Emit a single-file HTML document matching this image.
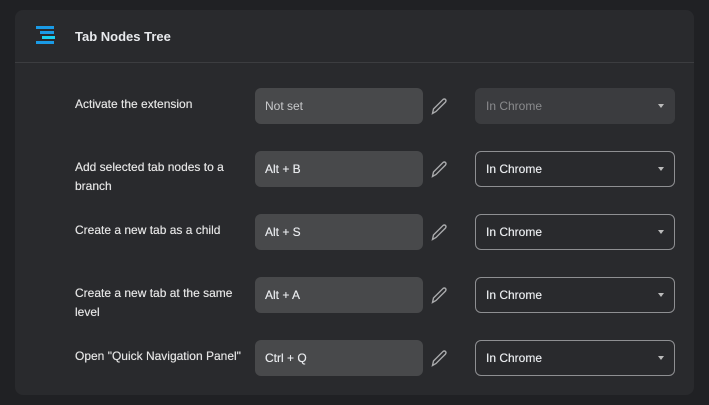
<!DOCTYPE html><html><head><style>
body{margin:0;width:709px;height:405px;background:#202124;font-family:"Liberation Sans",sans-serif;overflow:hidden;position:relative}
.card{position:absolute;left:15px;top:10px;width:679px;height:385px;background:#292a2d;border-radius:8px}
.hdr{position:absolute;left:0;top:0;width:679px;height:52px;border-bottom:1px solid #3c3d40}
.title{position:absolute;left:60px;top:19px;color:#e8eaed;font-size:13px;font-weight:bold}
.lbl{position:absolute;left:75px;color:#e3e3e3;font-size:12px;line-height:19px;width:180px;text-shadow:0 0 0.4px #e3e3e3}
.in{position:absolute;left:255px;width:168px;height:36px;background:#48494b;border-radius:6px;color:#e8eaed;font-size:12px;line-height:36px;text-indent:10px;text-shadow:0 0 0.4px #e8eaed}
.pen{position:absolute;left:430px}
.sel{position:absolute;left:475px;width:198px;height:34px;border:1px solid #8e8f92;border-radius:6px;color:#e8eaed;font-size:12px;line-height:34px;text-indent:10px;text-shadow:0 0 0.4px #e8eaed}
.sel:after{content:"";position:absolute;right:10px;top:15px;border:3.5px solid transparent;border-top:4px solid #bbb}
.dis{background:#3b3c3f;border-color:#3b3c3f;color:#8a8b8d;text-shadow:none}
</style></head><body>
<div class="card"><div class="hdr">
<svg style="position:absolute;left:21px;top:16px" width="20" height="19"><rect x="0" y="0" width="18" height="3" fill="#1a9be6"/><rect x="4" y="5" width="14" height="3" fill="#1a9be6"/><rect x="6" y="10" width="13" height="3" fill="#1ad0f0"/><rect x="0" y="15" width="18" height="3" fill="#1a9be6"/></svg>
<div class="title">Tab Nodes Tree</div></div></div>
<div class="lbl" style="top:95px">Activate the extension</div>
<div class="in" style="top:88px;color:#c8c9cb;text-shadow:none">Not set</div>
<div class="sel dis" style="top:88px">In Chrome</div>
<div class="lbl" style="top:158px">Add selected tab nodes to a branch</div>
<div class="in" style="top:151px">Alt + B</div>
<div class="sel" style="top:151px">In Chrome</div>
<div class="lbl" style="top:221px">Create a new tab as a child</div>
<div class="in" style="top:214px">Alt + S</div>
<div class="sel" style="top:214px">In Chrome</div>
<div class="lbl" style="top:284px">Create a new tab at the same level</div>
<div class="in" style="top:277px">Alt + A</div>
<div class="sel" style="top:277px">In Chrome</div>
<div class="lbl" style="top:347px">Open "Quick Navigation Panel"</div>
<div class="in" style="top:340px">Ctrl + Q</div>
<div class="sel" style="top:340px">In Chrome</div>
<svg class="pen" style="top:96px" width="18" height="20"><path d="M2.5 17.5 L3.5 13 L13 3.5 Q14.5 2.5 15.5 3.5 Q16.5 4.5 15.5 6 L6 15.5 Z" fill="none" stroke="#a8a9ab" stroke-width="1.4"/></svg>
<svg class="pen" style="top:159px" width="18" height="20"><path d="M2.5 17.5 L3.5 13 L13 3.5 Q14.5 2.5 15.5 3.5 Q16.5 4.5 15.5 6 L6 15.5 Z" fill="none" stroke="#a8a9ab" stroke-width="1.4"/></svg>
<svg class="pen" style="top:222px" width="18" height="20"><path d="M2.5 17.5 L3.5 13 L13 3.5 Q14.5 2.5 15.5 3.5 Q16.5 4.5 15.5 6 L6 15.5 Z" fill="none" stroke="#a8a9ab" stroke-width="1.4"/></svg>
<svg class="pen" style="top:285px" width="18" height="20"><path d="M2.5 17.5 L3.5 13 L13 3.5 Q14.5 2.5 15.5 3.5 Q16.5 4.5 15.5 6 L6 15.5 Z" fill="none" stroke="#a8a9ab" stroke-width="1.4"/></svg>
<svg class="pen" style="top:348px" width="18" height="20"><path d="M2.5 17.5 L3.5 13 L13 3.5 Q14.5 2.5 15.5 3.5 Q16.5 4.5 15.5 6 L6 15.5 Z" fill="none" stroke="#a8a9ab" stroke-width="1.4"/></svg>
</body></html>
